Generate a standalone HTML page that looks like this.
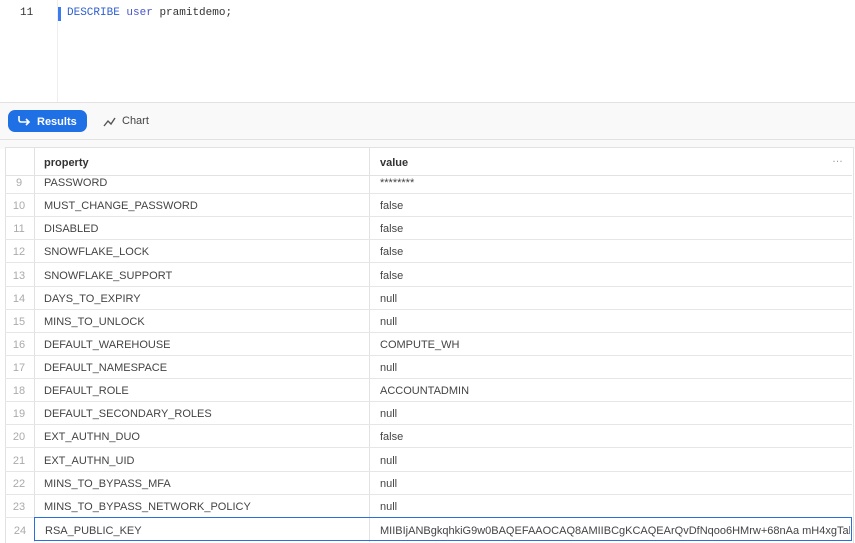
<!DOCTYPE html>
<html><head><style>
body{margin:0;width:855px;height:542px;overflow:hidden;background:#fff;font-family:"Liberation Sans",sans-serif;position:relative}
.abs{position:absolute}
.code{font-family:"Liberation Mono",monospace;font-size:11px}
.row{position:absolute;left:5px;width:847px;height:23px;border-bottom:1px solid #e6e6e6;font-size:11px;color:#444}
.row span{position:absolute;top:7px}
.n{left:0;width:28px;text-align:center;color:#aaa}
.p{left:39px}.v{left:375px}
</style></head><body>
<div class="abs code" style="left:20px;top:-8px;color:#555">10</div>
<div class="abs code" style="left:20px;top:7px;color:#333">11</div>
<div class="abs" style="left:58px;top:7px;width:3px;height:14px;background:#3a7bf0"></div>
<div class="abs code" style="left:67px;top:7px"><span style="color:#2f5fd0">DESCRIBE</span> <span style="color:#4a55c8">user</span> <span style="color:#333">pramitdemo;</span></div>
<div class="abs" style="left:57px;top:0;width:1px;height:102px;background:#eee"></div>
<div class="abs" style="left:0;top:102px;width:855px;height:46px;background:#f9f9f9;border-top:1px solid #e2e2e2"></div>
<div class="abs" style="left:0;top:139px;width:855px;height:1px;background:#e2e2e2"></div>
<div class="abs" style="left:8px;top:110px;width:79px;height:22px;border-radius:7px;background:#1f6fe5;color:#fff;font-size:11px;font-weight:bold">
<svg class="abs" style="left:9px;top:5px" width="14" height="12" viewBox="0 0 14 12"><path d="M2 1v4a2 2 0 0 0 2 2h8M9 4l3 3-3 3" stroke="#fff" stroke-width="1.6" fill="none"/></svg>
<span class="abs" style="left:29px;top:6px">Results</span></div>
<svg class="abs" style="left:103px;top:116px" width="13" height="12" viewBox="0 0 13 12"><path d="M1 10l4-5 3 3 4-6" stroke="#555" stroke-width="1.4" fill="none"/></svg>
<div class="abs" style="left:122px;top:115px;font-size:11px;color:#444">Chart</div>
<div class="abs" style="left:5px;top:147px;width:847px;height:395px;border:1px solid #e2e2e2;border-bottom:none;background:#fff"></div>
<div class="abs" style="left:34px;top:147px;width:1px;height:395px;background:#e2e2e2"></div>
<div class="abs" style="left:369px;top:147px;width:1px;height:395px;background:#e2e2e2"></div>
<div id="rows"></div>
<div class="abs" style="left:6px;top:148px;width:846px;height:27px;background:#fff;border-bottom:1px solid #e2e2e2;font-size:11px;font-weight:bold;color:#333">
<div class="abs" style="left:28px;width:1px;height:27px;background:#e2e2e2"></div>
<div class="abs" style="left:363px;width:1px;height:27px;background:#e2e2e2"></div>
<span class="abs" style="left:38px;top:9px">property</span><span class="abs" style="left:374px;top:9px">value</span><span class="abs" style="left:826px;top:5px;color:#999;font-weight:normal">…</span></div>
<script>
var d=[["9","PASSWORD","********"],["10","MUST_CHANGE_PASSWORD","false"],["11","DISABLED","false"],["12","SNOWFLAKE_LOCK","false"],["13","SNOWFLAKE_SUPPORT","false"],["14","DAYS_TO_EXPIRY","null"],["15","MINS_TO_UNLOCK","null"],["16","DEFAULT_WAREHOUSE","COMPUTE_WH"],["17","DEFAULT_NAMESPACE","null"],["18","DEFAULT_ROLE","ACCOUNTADMIN"],["19","DEFAULT_SECONDARY_ROLES","null"],["20","EXT_AUTHN_DUO","false"],["21","EXT_AUTHN_UID","null"],["22","MINS_TO_BYPASS_MFA","null"],["23","MINS_TO_BYPASS_NETWORK_POLICY","null"],["24","RSA_PUBLIC_KEY","MIIBIjANBgkqhkiG9w0BAQEFAAOCAQ8AMIIBCgKCAQEArQvDfNqoo6HMrw+68nAa mH4xgTalFv"]];
var h="";d.forEach(function(r,i){var t=170+i*23.13;var last=i==15;h+='<div class="row" style="top:'+t.toFixed(1)+'px;'+(last?'border:1px solid #2a6fdb;left:34px;width:816px;height:22px;':'')+'">'+(last?'<span class="n" style="left:-29px">':'<span class="n">')+r[0]+'</span><span class="p" style="'+(last?'left:10px':'')+'">'+r[1]+'</span><span class="v" style="'+(last?'left:345px;white-space:nowrap;overflow:hidden;width:470px':'')+'">'+r[2]+'</span></div>';});
document.getElementById("rows").innerHTML=h;
</script>
</body></html>
